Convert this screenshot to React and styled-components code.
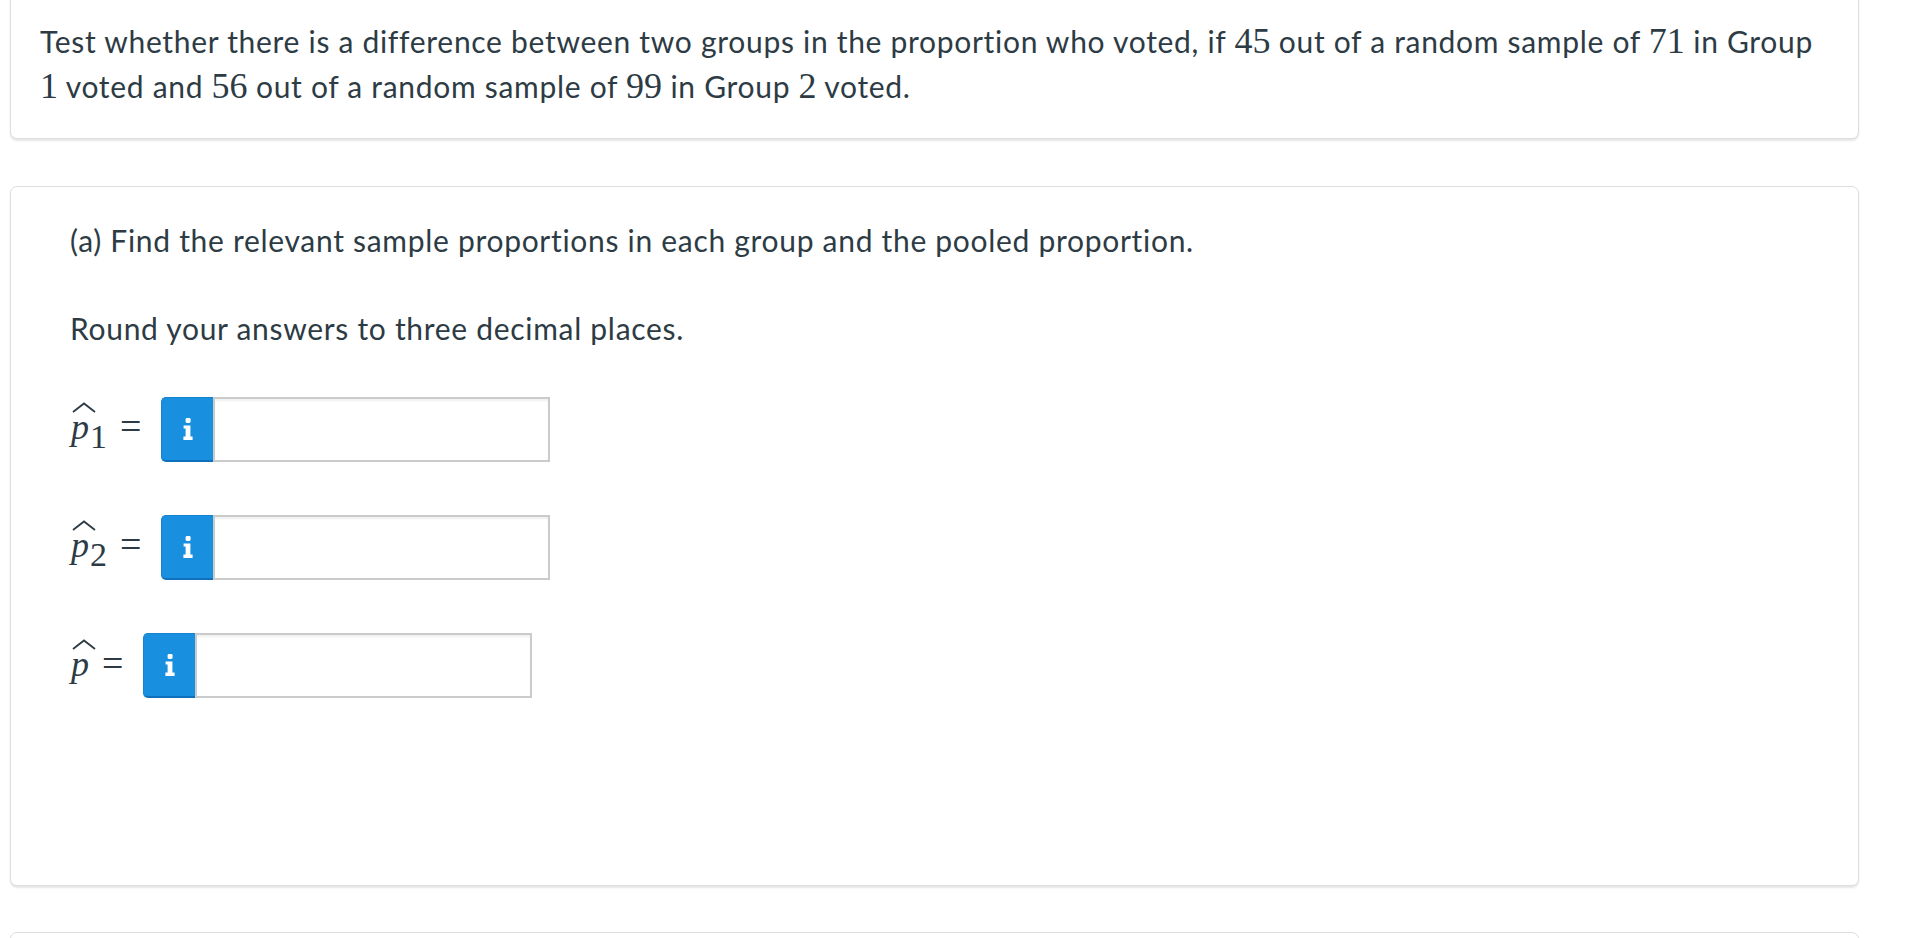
import React from "react";
import styled, {createGlobalStyle} from "styled-components";

const GlobalStyle = createGlobalStyle`
  body {
    margin: 0;
    background: #fff;
    font-family: Lato, "Open Sans", sans-serif;
    color: #2d3b45;
  }
`;

const Page = styled.div`
  margin-top: -12px;
  padding: 0 49px 0 10px;
`;

const Card = styled.div`
  background: #fff;
  border: 1px solid #dedede;
  border-radius: 7px;
  box-shadow: 0 2px 2px rgba(0, 0, 0, 0.1);
  padding: ${p => p.$pad};
  margin-top: ${p => p.$top || 0}px;
  min-height: ${p => p.$minH || 0}px;
`;

const Text = styled.p`
  margin: 0 0 ${p => p.$mb || 0}px;
  font-size: 30px;
  letter-spacing: 0.7px;
  line-height: 45px;
`;

const Num = styled.span`
  font-family: "Liberation Serif", "Times New Roman", serif;
  font-size: 36px;
  letter-spacing: 0;
  line-height: 1;
`;

const Rows = styled.div`
  display: flex;
  flex-direction: column;
  gap: 53px;
  margin-top: 46px;
`;

const Row = styled.div`
  display: flex;
  align-items: center;
`;

const MathLabel = styled.span`
  display: inline-flex;
  align-items: baseline;
  font-family: "Liberation Serif", "Times New Roman", serif;
  font-size: 36px;
  line-height: 30px;
  padding-bottom: 5px;
  margin-left: 1px;
`;

const Hatted = styled.span`
  position: relative;
  font-style: italic;
`;

const Hat = styled.svg`
  position: absolute;
  left: 1px;
  top: -10px;
  width: 24px;
  height: 11px;
`;

const Sub = styled.span`
  font-size: 34px;
  position: relative;
  top: 9px;
  margin-left: 1px;
`;

const Eq = styled.span`
  margin: 0 20px 0 13px;
  font-size: 38px;
`;

const Group = styled.div`
  display: flex;
  height: 65px;
`;

const InfoButton = styled.button`
  width: 52px;
  height: 65px;
  box-sizing: border-box;
  display: flex;
  align-items: center;
  justify-content: center;
  background: #198fe0;
  border: 1px solid #1683d2;
  border-bottom: 2px solid #1170bb;
  border-right: none;
  border-radius: 5px 0 0 5px;
  padding: 0;
  cursor: pointer;
`;

const Field = styled.input`
  width: 337px;
  height: 65px;
  box-sizing: border-box;
  border: 2px solid #cbcbcb;
  border-radius: 0;
  box-shadow: inset 0 2px 2px rgba(0, 0, 0, 0.06);
  padding: 0 12px;
  font-family: Lato, sans-serif;
  font-size: 26px;
  color: #2d3b45;
  outline: none;
`;

function InfoIcon() {
  return (
    <svg width="10" height="22" viewBox="0 0 10 22" fill="#fff">
      <rect x="2.6" y="0" width="5" height="5" rx="1.4"/>
      <path d="M0.6 7.5 H7.4 V18.6 H9.6 V22 H0.4 V18.6 H2.6 V10.6 H0.6 Z"/>
    </svg>
  );
}

function PHat({sub}) {
  return (
    <MathLabel>
      <Hatted>
        p
        <Hat viewBox="0 0 24 11">
          <path d="M1 10 L12 1.5 L23 10" fill="none" stroke="#2d3b45" strokeWidth="1.8"/>
        </Hat>
      </Hatted>
      {sub && <Sub>{sub}</Sub>}
      <Eq>=</Eq>
    </MathLabel>
  );
}

function AnswerRow({sub}) {
  return (
    <Row>
      <PHat sub={sub}/>
      <Group>
        <InfoButton aria-label="info"><InfoIcon/></InfoButton>
        <Field type="text"/>
      </Group>
    </Row>
  );
}

export default function App() {
  return (
    <Page>
      <GlobalStyle/>
      <Card $pad="30px 29px 29px">
        <Text>
          Test whether there is a difference between two groups in the proportion who voted, if <Num>45</Num> out
          of a random sample of <Num>71</Num> in Group<br/>
          <Num>1</Num> voted and <Num>56</Num> out of a random sample of <Num>99</Num> in Group <Num>2</Num> voted.
        </Text>
      </Card>

      <Card $top={47} $pad="31px 59px 187px">
        <Text $mb={43}>(a) Find the relevant sample proportions in each group and the pooled proportion.</Text>
        <Text>Round your answers to three decimal places.</Text>
        <Rows>
          <AnswerRow sub="1"/>
          <AnswerRow sub="2"/>
          <AnswerRow/>
        </Rows>
      </Card>

      <Card $top={46} $pad="30px" $minH={120}/>
    </Page>
  );
}
